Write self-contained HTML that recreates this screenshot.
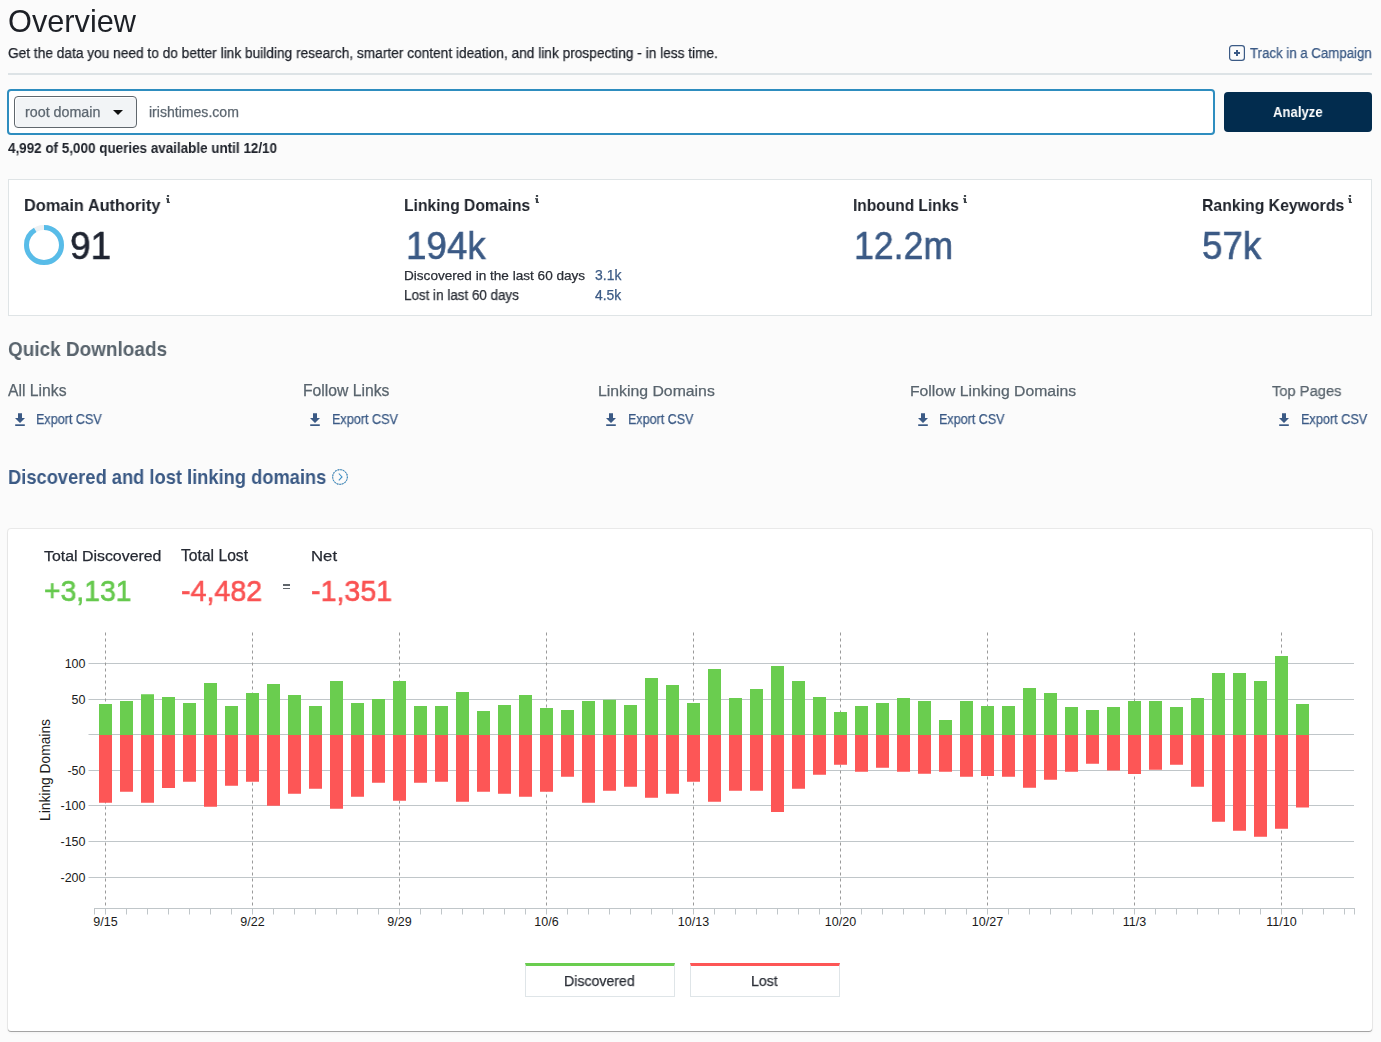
<!DOCTYPE html>
<html><head><meta charset="utf-8"><title>Overview</title><style>
html,body{margin:0;padding:0;}
body{width:1381px;height:1042px;background:#fbfbfb;position:relative;overflow:hidden;font-family:"Liberation Sans",sans-serif;}
.t{position:absolute;white-space:nowrap;line-height:1;transform-origin:0 0;will-change:transform;}
.b{position:absolute;box-sizing:border-box;}
</style></head><body>
<div class="b" style="left:8px;top:73px;width:1364px;height:2px;background:#dde3e6"></div>
<svg class="b" style="left:1229px;top:45px" width="16" height="16" viewBox="0 0 16 16"><rect x="0.6" y="0.6" width="14.8" height="14.8" rx="2.6" fill="none" stroke="#3b5a85" stroke-width="1.2"/><path d="M8 5V11M5 8H11" stroke="#3b5a85" stroke-width="2"/></svg>
<div class="b" style="left:7px;top:89px;width:1208px;height:46px;border:2px solid #2e8dbf;border-radius:4px;background:#fff"></div>
<div class="b" style="left:14px;top:96px;width:123px;height:32px;border:1px solid #60676d;border-radius:4px;background:#f2f4f6;box-shadow:inset 1px 1px 0 #fff"></div>
<svg class="b" style="left:113px;top:110px" width="10" height="5" viewBox="0 0 10 5"><path d="M0 0H10L5 5Z" fill="#111"/></svg>
<div class="b" style="left:1224px;top:92px;width:148px;height:40px;border-radius:4px;background:#022c4e"></div>
<div class="b" style="left:8px;top:179px;width:1364px;height:137px;border:1px solid #dfe4e6;background:#fff"></div>
<svg class="b" style="left:24px;top:225px" width="40" height="40" viewBox="0 0 40 40"><circle cx="20" cy="20" r="17.5" fill="none" stroke="#eef1f3" stroke-width="5"/><circle cx="20" cy="20" r="17.5" fill="none" stroke="#58bce8" stroke-width="5" stroke-dasharray="100.06 200" transform="rotate(-90 20 20)"/></svg>
<div class="b" style="left:8px;top:529px;width:1364px;height:502px;border-radius:3px;background:#fff;box-shadow:0 1px 0 rgba(0,0,0,0.27),0 0 0 1px rgba(0,0,0,0.07),0 2px 3px rgba(0,0,0,0.04)"></div>
<div class="b" style="left:525px;top:963px;width:150px;height:34px;border:1px solid #dfe5e8;border-top:3px solid #6acd4f;background:#fff"></div>
<div class="b" style="left:690px;top:963px;width:150px;height:34px;border:1px solid #dfe5e8;border-top:3px solid #fd5656;background:#fff"></div>
<svg class="b" style="left:0;top:0" width="1381" height="1042" viewBox="0 0 1381 1042" stroke-width="1">
<path d="M88.5 663.5H1354" stroke="#c0c6c9"/><path d="M88.5 699.5H1354" stroke="#c0c6c9"/><path d="M88.5 734.5H1354" stroke="#c0c6c9"/><path d="M88.5 770.5H1354" stroke="#c0c6c9"/><path d="M88.5 805.5H1354" stroke="#c0c6c9"/><path d="M88.5 841.5H1354" stroke="#c0c6c9"/><path d="M88.5 877.5H1354" stroke="#c0c6c9"/><path d="M105.5 632.5V906" stroke="#9a9a9a" stroke-dasharray="3,3"/><path d="M252.5 632.5V906" stroke="#9a9a9a" stroke-dasharray="3,3"/><path d="M399.5 632.5V906" stroke="#9a9a9a" stroke-dasharray="3,3"/><path d="M546.5 632.5V906" stroke="#9a9a9a" stroke-dasharray="3,3"/><path d="M693.5 632.5V906" stroke="#9a9a9a" stroke-dasharray="3,3"/><path d="M840.5 632.5V906" stroke="#9a9a9a" stroke-dasharray="3,3"/><path d="M987.5 632.5V906" stroke="#9a9a9a" stroke-dasharray="3,3"/><path d="M1134.5 632.5V906" stroke="#9a9a9a" stroke-dasharray="3,3"/><path d="M1281.5 632.5V906" stroke="#9a9a9a" stroke-dasharray="3,3"/><path d="M99 704.1h13V735h-13ZM120 701.0h13V735h-13ZM141 694.2h13V735h-13ZM162 697.0h13V735h-13ZM183 702.9h13V735h-13ZM204 682.9h13V735h-13ZM225 706.0h13V735h-13ZM246 693.0h13V735h-13ZM267 684.1h13V735h-13ZM288 695.1h13V735h-13ZM309 706.0h13V735h-13ZM330 681.0h13V735h-13ZM351 702.9h13V735h-13ZM372 699.0h13V735h-13ZM393 681.0h13V735h-13ZM414 706.0h13V735h-13ZM435 706.0h13V735h-13ZM456 691.9h13V735h-13ZM477 711.0h13V735h-13ZM498 705.0h13V735h-13ZM519 695.1h13V735h-13ZM540 707.9h13V735h-13ZM561 710.0h13V735h-13ZM582 701.0h13V735h-13ZM603 699.7h13V735h-13ZM624 705.0h13V735h-13ZM645 678.0h13V735h-13ZM666 685.0h13V735h-13ZM687 702.9h13V735h-13ZM708 669.0h13V735h-13ZM729 698.0h13V735h-13ZM750 689.0h13V735h-13ZM771 666.0h13V735h-13ZM792 681.0h13V735h-13ZM813 697.0h13V735h-13ZM834 711.9h13V735h-13ZM855 706.0h13V735h-13ZM876 702.9h13V735h-13ZM897 698.0h13V735h-13ZM918 701.0h13V735h-13ZM939 720.1h13V735h-13ZM960 701.0h13V735h-13ZM981 706.0h13V735h-13ZM1002 706.0h13V735h-13ZM1023 687.9h13V735h-13ZM1044 693.0h13V735h-13ZM1065 706.9h13V735h-13ZM1086 710.0h13V735h-13ZM1107 706.9h13V735h-13ZM1128 701.0h13V735h-13ZM1149 701.0h13V735h-13ZM1170 706.9h13V735h-13ZM1191 698.0h13V735h-13ZM1212 673.0h13V735h-13ZM1233 673.0h13V735h-13ZM1254 681.0h13V735h-13ZM1275 656.0h13V735h-13ZM1296 704.1h13V735h-13Z" fill="#6acd4f"/><path d="M99 735h13V802.8h-13ZM120 735h13V791.7h-13ZM141 735h13V802.8h-13ZM162 735h13V787.9h-13ZM183 735h13V781.8h-13ZM204 735h13V806.8h-13ZM225 735h13V785.8h-13ZM246 735h13V781.8h-13ZM267 735h13V805.8h-13ZM288 735h13V793.8h-13ZM309 735h13V788.7h-13ZM330 735h13V808.7h-13ZM351 735h13V796.7h-13ZM372 735h13V782.7h-13ZM393 735h13V800.7h-13ZM414 735h13V782.7h-13ZM435 735h13V781.8h-13ZM456 735h13V801.8h-13ZM477 735h13V791.7h-13ZM498 735h13V793.8h-13ZM519 735h13V796.7h-13ZM540 735h13V791.7h-13ZM561 735h13V776.7h-13ZM582 735h13V802.8h-13ZM603 735h13V790.8h-13ZM624 735h13V786.8h-13ZM645 735h13V797.8h-13ZM666 735h13V793.8h-13ZM687 735h13V781.8h-13ZM708 735h13V801.8h-13ZM729 735h13V790.8h-13ZM750 735h13V790.8h-13ZM771 735h13V811.9h-13ZM792 735h13V788.7h-13ZM813 735h13V774.8h-13ZM834 735h13V764.8h-13ZM855 735h13V771.7h-13ZM876 735h13V767.7h-13ZM897 735h13V771.7h-13ZM918 735h13V773.8h-13ZM939 735h13V771.7h-13ZM960 735h13V776.7h-13ZM981 735h13V775.9h-13ZM1002 735h13V776.7h-13ZM1023 735h13V787.8h-13ZM1044 735h13V779.8h-13ZM1065 735h13V771.7h-13ZM1086 735h13V763.7h-13ZM1107 735h13V770.6h-13ZM1128 735h13V773.9h-13ZM1149 735h13V769.8h-13ZM1170 735h13V764.8h-13ZM1191 735h13V786.7h-13ZM1212 735h13V821.7h-13ZM1233 735h13V830.8h-13ZM1254 735h13V836.7h-13ZM1275 735h13V828.8h-13ZM1296 735h13V807.6h-13Z" fill="#fd5656"/><path d="M94 908.5H1354.5" stroke="#c0c6c9"/><path d="M94.5 908V914.5M105.5 908V914.5M126.5 908V914.5M147.5 908V914.5M168.5 908V914.5M189.5 908V914.5M210.5 908V914.5M231.5 908V914.5M252.5 908V914.5M273.5 908V914.5M294.5 908V914.5M315.5 908V914.5M336.5 908V914.5M357.5 908V914.5M378.5 908V914.5M399.5 908V914.5M420.5 908V914.5M441.5 908V914.5M462.5 908V914.5M483.5 908V914.5M504.5 908V914.5M525.5 908V914.5M546.5 908V914.5M567.5 908V914.5M588.5 908V914.5M609.5 908V914.5M630.5 908V914.5M651.5 908V914.5M672.5 908V914.5M693.5 908V914.5M714.5 908V914.5M735.5 908V914.5M756.5 908V914.5M777.5 908V914.5M798.5 908V914.5M819.5 908V914.5M840.5 908V914.5M861.5 908V914.5M882.5 908V914.5M903.5 908V914.5M924.5 908V914.5M945.5 908V914.5M966.5 908V914.5M987.5 908V914.5M1008.5 908V914.5M1029.5 908V914.5M1050.5 908V914.5M1071.5 908V914.5M1092.5 908V914.5M1113.5 908V914.5M1134.5 908V914.5M1155.5 908V914.5M1176.5 908V914.5M1197.5 908V914.5M1218.5 908V914.5M1239.5 908V914.5M1260.5 908V914.5M1281.5 908V914.5M1302.5 908V914.5M1323.5 908V914.5M1344.5 908V914.5M1354.5 908V914.5" stroke="#c0c6c9"/>
<g font-family="Liberation Sans" font-size="12.5" fill="#1b1b1b"><text x="105.5" y="926" text-anchor="middle">9/15</text><text x="252.5" y="926" text-anchor="middle">9/22</text><text x="399.5" y="926" text-anchor="middle">9/29</text><text x="546.5" y="926" text-anchor="middle">10/6</text><text x="693.5" y="926" text-anchor="middle">10/13</text><text x="840.5" y="926" text-anchor="middle">10/20</text><text x="987.5" y="926" text-anchor="middle">10/27</text><text x="1134.5" y="926" text-anchor="middle">11/3</text><text x="1281.5" y="926" text-anchor="middle">11/10</text><text x="85.5" y="668.0" text-anchor="end">100</text><text x="85.5" y="704.0" text-anchor="end">50</text><text x="85.5" y="775.0" text-anchor="end">-50</text><text x="85.5" y="810.0" text-anchor="end">-100</text><text x="85.5" y="846.0" text-anchor="end">-150</text><text x="85.5" y="882.0" text-anchor="end">-200</text></g>
<text transform="translate(49.5 770) rotate(-90)" text-anchor="middle" font-family="Liberation Sans" font-size="13.8" fill="#1b1b1b">Linking Domains</text>
</svg>
<div class="t" style="left:7.77px;top:7.00px;font-size:30.71px;font-weight:normal;color:#1d2026">Overview</div>
<div class="t" style="left:7.81px;top:46.01px;font-size:14.49px;font-weight:normal;color:#20242c;transform:scaleX(0.9461);-webkit-text-stroke:0.25px #20242c">Get the data you need to do better link building research, smarter content ideation, and link prospecting - in less time.</div>
<div class="t" style="left:1250.43px;top:46.01px;font-size:14.49px;font-weight:normal;color:#3b5a85;transform:scaleX(0.9147);-webkit-text-stroke:0.25px #3b5a85">Track in a Campaign</div>
<div class="t" style="left:24.64px;top:105.01px;font-size:14.29px;font-weight:normal;color:#5d6770;-webkit-text-stroke:0.25px #5d6770">root domain</div>
<div class="t" style="left:148.66px;top:105.01px;font-size:14.07px;font-weight:normal;color:#5d6770;-webkit-text-stroke:0.25px #5d6770">irishtimes.com</div>
<div class="t" style="left:1272.74px;top:105.01px;font-size:14.64px;font-weight:bold;color:#ffffff;transform:scaleX(0.8967)">Analyze</div>
<div class="t" style="left:8.17px;top:141.01px;font-size:14.20px;font-weight:bold;color:#20242c;transform:scaleX(0.9476)">4,992 of 5,000 queries available until 12/10</div>
<div class="t" style="left:23.82px;top:197.00px;font-size:17.39px;font-weight:bold;color:#20242c;transform:scaleX(0.9399)">Domain Authority</div>
<div class="t" style="left:69.52px;top:227.01px;font-size:38.26px;font-weight:normal;color:#1f2431;transform:scaleX(0.9679);-webkit-text-stroke:0.6px #1f2431">91</div>
<div class="t" style="left:404.46px;top:197.00px;font-size:17.39px;font-weight:bold;color:#20242c;transform:scaleX(0.9015)">Linking Domains</div>
<div class="t" style="left:405.73px;top:227.00px;font-size:38.84px;font-weight:normal;color:#3b5a85;transform:scaleX(0.9463);-webkit-text-stroke:0.6px #3b5a85">194k</div>
<div class="t" style="left:403.91px;top:269.01px;font-size:13.59px;font-weight:normal;color:#2a2e36;-webkit-text-stroke:0.25px #2a2e36">Discovered in the last 60 days</div>
<div class="t" style="left:595.28px;top:269.01px;font-size:13.96px;font-weight:normal;color:#3b5a85;-webkit-text-stroke:0.25px #3b5a85">3.1k</div>
<div class="t" style="left:403.93px;top:289.00px;font-size:13.77px;font-weight:normal;color:#2a2e36;transform:scaleX(0.9747);-webkit-text-stroke:0.25px #2a2e36">Lost in last 60 days</div>
<div class="t" style="left:595.42px;top:289.01px;font-size:13.88px;font-weight:normal;color:#3b5a85;-webkit-text-stroke:0.25px #3b5a85">4.5k</div>
<div class="t" style="left:852.97px;top:197.00px;font-size:17.39px;font-weight:bold;color:#20242c;transform:scaleX(0.8920)">Inbound Links</div>
<div class="t" style="left:854.01px;top:227.01px;font-size:38.26px;font-weight:normal;color:#3b5a85;transform:scaleX(0.9314);-webkit-text-stroke:0.6px #3b5a85">12.2m</div>
<div class="t" style="left:1201.85px;top:197.00px;font-size:17.39px;font-weight:bold;color:#20242c;transform:scaleX(0.9091)">Ranking Keywords</div>
<div class="t" style="left:1202.43px;top:227.01px;font-size:38.26px;font-weight:normal;color:#3b5a85;transform:scaleX(0.9613);-webkit-text-stroke:0.6px #3b5a85">57k</div>
<div class="t" style="left:7.74px;top:339.01px;font-size:20.87px;font-weight:bold;color:#59646d;transform:scaleX(0.9089)">Quick Downloads</div>
<div class="t" style="left:8.10px;top:383.00px;font-size:15.73px;font-weight:normal;color:#59646d;-webkit-text-stroke:0.25px #59646d">All Links</div>
<div class="t" style="left:303.14px;top:383.01px;font-size:15.71px;font-weight:normal;color:#59646d;-webkit-text-stroke:0.25px #59646d">Follow Links</div>
<div class="t" style="left:598.14px;top:383.01px;font-size:15.51px;font-weight:normal;color:#59646d;transform:scaleX(1.0192);-webkit-text-stroke:0.25px #59646d">Linking Domains</div>
<div class="t" style="left:910.24px;top:383.01px;font-size:15.51px;font-weight:normal;color:#59646d;transform:scaleX(1.0151);-webkit-text-stroke:0.25px #59646d">Follow Linking Domains</div>
<div class="t" style="left:1272.01px;top:383.01px;font-size:15.51px;font-weight:normal;color:#59646d;transform:scaleX(0.9475);-webkit-text-stroke:0.25px #59646d">Top Pages</div>
<div class="t" style="left:36.49px;top:412.00px;font-size:14.06px;font-weight:normal;color:#3b5a85;transform:scaleX(0.8955);-webkit-text-stroke:0.25px #3b5a85">Export CSV</div>
<div class="t" style="left:331.99px;top:412.00px;font-size:14.06px;font-weight:normal;color:#3b5a85;transform:scaleX(0.8983);-webkit-text-stroke:0.25px #3b5a85">Export CSV</div>
<div class="t" style="left:627.70px;top:412.00px;font-size:14.06px;font-weight:normal;color:#3b5a85;transform:scaleX(0.8914);-webkit-text-stroke:0.25px #3b5a85">Export CSV</div>
<div class="t" style="left:939.40px;top:412.00px;font-size:14.06px;font-weight:normal;color:#3b5a85;transform:scaleX(0.8928);-webkit-text-stroke:0.25px #3b5a85">Export CSV</div>
<div class="t" style="left:1300.59px;top:412.00px;font-size:14.06px;font-weight:normal;color:#3b5a85;transform:scaleX(0.9025);-webkit-text-stroke:0.25px #3b5a85">Export CSV</div>
<div class="t" style="left:8.00px;top:467.01px;font-size:20.43px;font-weight:bold;color:#3b5a85;transform:scaleX(0.8963)">Discovered and lost linking domains</div>
<div class="t" style="left:43.78px;top:548.01px;font-size:15.51px;font-weight:normal;color:#262a33;transform:scaleX(1.0251);-webkit-text-stroke:0.25px #262a33">Total Discovered</div>
<div class="t" style="left:181.19px;top:548.01px;font-size:15.67px;font-weight:normal;color:#262a33;-webkit-text-stroke:0.25px #262a33">Total Lost</div>
<div class="t" style="left:310.76px;top:548.01px;font-size:15.51px;font-weight:normal;color:#262a33;transform:scaleX(1.0800);-webkit-text-stroke:0.25px #262a33">Net</div>
<div class="t" style="left:43.67px;top:576.01px;font-size:29.86px;font-weight:normal;color:#66c94e;transform:scaleX(0.9501);-webkit-text-stroke:0.6px #66c94e">+3,131</div>
<div class="t" style="left:181.15px;top:576.01px;font-size:29.86px;font-weight:normal;color:#fa5353;transform:scaleX(0.9588);-webkit-text-stroke:0.6px #fa5353">-4,482</div>
<div class="t" style="left:310.95px;top:576.01px;font-size:29.86px;font-weight:normal;color:#fa5353;transform:scaleX(0.9588);-webkit-text-stroke:0.6px #fa5353">-1,351</div>
<div class="t" style="left:564.47px;top:974.01px;font-size:14.49px;font-weight:normal;color:#2a2e36;transform:scaleX(0.9756);-webkit-text-stroke:0.25px #2a2e36">Discovered</div>
<div class="t" style="left:750.87px;top:974.01px;font-size:14.49px;font-weight:normal;color:#2a2e36;transform:scaleX(0.9785);-webkit-text-stroke:0.25px #2a2e36">Lost</div>
<svg class="b" style="left:15.0px;top:413px" width="10" height="13" viewBox="0 0 10 13"><path d="M3 0.2H7V5H10L5 9.9L0 5H3Z" fill="#3b5a85"/><rect x="0.2" y="11.3" width="9.6" height="1.7" fill="#3b5a85"/></svg><svg class="b" style="left:309.5px;top:413px" width="10" height="13" viewBox="0 0 10 13"><path d="M3 0.2H7V5H10L5 9.9L0 5H3Z" fill="#3b5a85"/><rect x="0.2" y="11.3" width="9.6" height="1.7" fill="#3b5a85"/></svg><svg class="b" style="left:605.7px;top:413px" width="10" height="13" viewBox="0 0 10 13"><path d="M3 0.2H7V5H10L5 9.9L0 5H3Z" fill="#3b5a85"/><rect x="0.2" y="11.3" width="9.6" height="1.7" fill="#3b5a85"/></svg><svg class="b" style="left:917.7px;top:413px" width="10" height="13" viewBox="0 0 10 13"><path d="M3 0.2H7V5H10L5 9.9L0 5H3Z" fill="#3b5a85"/><rect x="0.2" y="11.3" width="9.6" height="1.7" fill="#3b5a85"/></svg><svg class="b" style="left:1278.6px;top:413px" width="10" height="13" viewBox="0 0 10 13"><path d="M3 0.2H7V5H10L5 9.9L0 5H3Z" fill="#3b5a85"/><rect x="0.2" y="11.3" width="9.6" height="1.7" fill="#3b5a85"/></svg><svg class="b" style="left:165.9px;top:195px" width="5" height="8" viewBox="0 0 5 8"><g fill="#3c4348"><rect x="0.9" y="0" width="2.2" height="1.9"/><rect x="0" y="3.2" width="1.2" height="1.1"/><rect x="0.9" y="3.2" width="2.1" height="4.8"/><rect x="2.8" y="6.8" width="1.1" height="1.2"/></g></svg><svg class="b" style="left:535px;top:195px" width="5" height="8" viewBox="0 0 5 8"><g fill="#3c4348"><rect x="0.9" y="0" width="2.2" height="1.9"/><rect x="0" y="3.2" width="1.2" height="1.1"/><rect x="0.9" y="3.2" width="2.1" height="4.8"/><rect x="2.8" y="6.8" width="1.1" height="1.2"/></g></svg><svg class="b" style="left:963px;top:195px" width="5" height="8" viewBox="0 0 5 8"><g fill="#3c4348"><rect x="0.9" y="0" width="2.2" height="1.9"/><rect x="0" y="3.2" width="1.2" height="1.1"/><rect x="0.9" y="3.2" width="2.1" height="4.8"/><rect x="2.8" y="6.8" width="1.1" height="1.2"/></g></svg><svg class="b" style="left:1348px;top:195px" width="5" height="8" viewBox="0 0 5 8"><g fill="#3c4348"><rect x="0.9" y="0" width="2.2" height="1.9"/><rect x="0" y="3.2" width="1.2" height="1.1"/><rect x="0.9" y="3.2" width="2.1" height="4.8"/><rect x="2.8" y="6.8" width="1.1" height="1.2"/></g></svg><svg class="b" style="left:332px;top:469px" width="16" height="16" viewBox="0 0 16 16"><circle cx="8" cy="8" r="7.4" fill="none" stroke="#8fa9bb" stroke-width="1"/><circle cx="8" cy="8" r="7.4" fill="none" stroke="#3a8fc9" stroke-width="1.1" stroke-dasharray="1.2 1.5"/><path d="M6.8 4.5L10 8L6.8 11.3" fill="none" stroke="#3d8fc6" stroke-width="1.1"/></svg><div class="b" style="left:283.3px;top:584.3px;width:7px;height:1.5px;background:#60666c"></div><div class="b" style="left:283.3px;top:587.9px;width:7px;height:1.5px;background:#60666c"></div>
</body></html>
